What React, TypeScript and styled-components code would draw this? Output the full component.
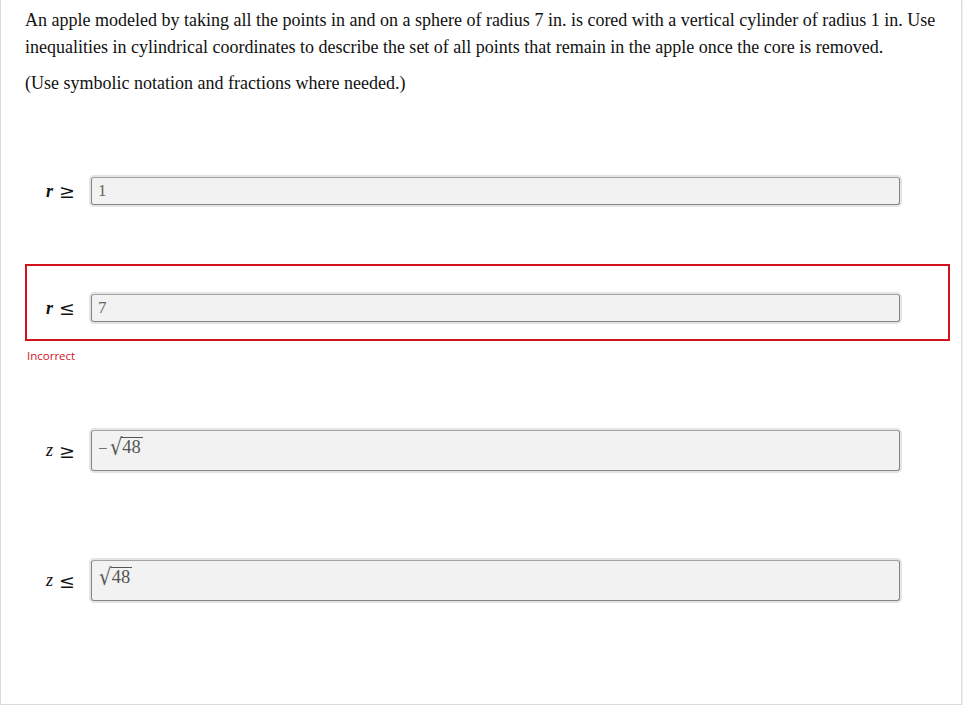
import styled, { createGlobalStyle } from "styled-components";

const GlobalStyle = createGlobalStyle`
  body {
    margin: 0;
    background: #ffffff;
  }
`;

const Panel = styled.div`
  width: 962px;
  height: 705px;
  box-sizing: border-box;
  border: 1px solid #dcdcdc;
  border-top: none;
  box-shadow: 0 1px 2px rgba(0, 0, 0, 0.18);
  background: #ffffff;
  padding: 7px 0 0 24px;
  font-family: "Liberation Serif", "Times New Roman", serif;
  color: #111;
`;

const Prompt = styled.p`
  margin: 0 0 9px;
  font-size: 18px;
  line-height: 27px;
  padding-right: 16px;
`;

const Parts = styled.div`
  margin-top: 50px;
  display: flex;
  flex-direction: column;
  gap: 40px;
  width: 925px;
`;

const Part = styled.div<{ $wrong?: boolean }>`
  display: flex;
  align-items: center;
  border: 2px solid ${(p) => (p.$wrong ? "#d0131d" : "transparent")};
  padding: 28px 48px 17px 19px;
`;

const Label = styled.div`
  width: 45px;
  flex-shrink: 0;
  font-size: 18px;
  white-space: nowrap;
  display: flex;
  align-items: center;
`;

const Var = styled.span<{ $bold?: boolean }>`
  font-style: italic;
  font-weight: ${(p) => (p.$bold ? 700 : 400)};
  margin-right: 6px;
`;

const Relation = styled.span`
  font-family: "DejaVu Serif", serif;
  font-size: 19px;
`;

const AnswerBox = styled.div<{ $tall?: boolean }>`
  flex: 1;
  height: ${(p) => (p.$tall ? "39px" : "26px")};
  background: #f2f2f2;
  border: 1px solid #858585;
  border-top-color: #a3a3a3;
  border-radius: 3px;
  box-shadow: 0 0 0 2px #e4e4e4;
  display: flex;
  align-items: center;
  padding: 0 6px;
  font-size: 17px;
  color: #6e6258;
`;

const MathValue = styled.span`
  display: inline-flex;
  align-items: flex-end;
  font-family: "Liberation Serif", "Times New Roman", serif;
  color: #555;
  margin-top: -8px;
`;

const Minus = styled.span`
  margin-right: 1px;
  align-self: center;
  margin-top: 4px;
`;

const Radical = styled.span`
  font-family: "DejaVu Serif", serif;
  font-size: 23px;
  line-height: 24px;
  transform: scaleX(0.85);
  margin-right: -2px;
`;

const Radicand = styled.span`
  border-top: 1px solid #555;
  font-family: "Liberation Serif", "Times New Roman", serif;
  font-size: 18.5px;
  line-height: 19px;
  padding: 0 2px 0 1px;
  margin-bottom: 2px;
`;

const Feedback = styled.div`
  margin: 8px 0 -3px 2px;
  font-family: "Open Sans", "Noto Sans", sans-serif;
  font-size: 11.5px;
  line-height: 14px;
  color: #d0131d;
`;

const Group = styled.div``;

function Sqrt({ value, negative }: { value: string; negative?: boolean }) {
  return (
    <MathValue>
      {negative && <Minus>−</Minus>}
      <Radical>√</Radical>
      <Radicand>{value}</Radicand>
    </MathValue>
  );
}

export default function App() {
  return (
    <>
      <GlobalStyle />
      <Panel>
        <Prompt>
          An apple modeled by taking all the points in and on a sphere of radius 7 in. is cored with a
          vertical cylinder of radius 1 in. Use inequalities in cylindrical coordinates to describe the
          set of all points that remain in the apple once the core is removed.
        </Prompt>
        <Prompt>(Use symbolic notation and fractions where needed.)</Prompt>
        <Parts>
          <Part>
            <Label>
              <Var $bold>r</Var>
              <Relation>≥</Relation>
            </Label>
            <AnswerBox>1</AnswerBox>
          </Part>
          <Group>
            <Part $wrong>
              <Label>
                <Var $bold>r</Var>
                <Relation>≤</Relation>
              </Label>
              <AnswerBox>7</AnswerBox>
            </Part>
            <Feedback>Incorrect</Feedback>
          </Group>
          <Part>
            <Label>
              <Var>z</Var>
              <Relation>≥</Relation>
            </Label>
            <AnswerBox $tall>
              <Sqrt value="48" negative />
            </AnswerBox>
          </Part>
          <Part>
            <Label>
              <Var>z</Var>
              <Relation>≤</Relation>
            </Label>
            <AnswerBox $tall>
              <Sqrt value="48" />
            </AnswerBox>
          </Part>
        </Parts>
      </Panel>
    </>
  );
}
